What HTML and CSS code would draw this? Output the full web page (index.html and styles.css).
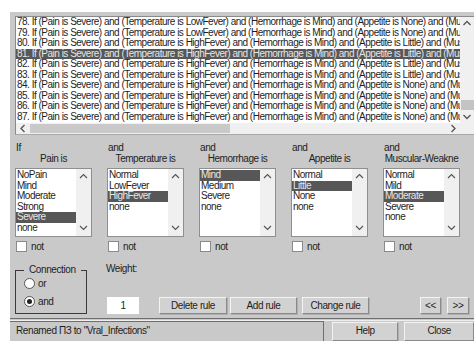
FILE: index.html
```html
<!DOCTYPE html>
<html>
<head>
<meta charset="utf-8">
<link rel="stylesheet" href="styles.css">
</head>
<body>
<div class="win">
  <div class="rules">
    <div class="rules-body">
      <div class="rows">
        <div class="row">78. If (Pain is Severe) and (Temperature is LowFever) and (Hemorrhage is Mind) and (Appetite is None) and (Muscular-Weakness is Normal)</div>
        <div class="row">79. If (Pain is Severe) and (Temperature is LowFever) and (Hemorrhage is Mind) and (Appetite is None) and (Muscular-Weakness is Mild)</div>
        <div class="row">80. If (Pain is Severe) and (Temperature is HighFever) and (Hemorrhage is Mind) and (Appetite is Little) and (Muscular-Weakness is Normal)</div>
        <div class="row sel">81. If (Pain is Severe) and (Temperature is HighFever) and (Hemorrhage is Mind) and (Appetite is Little) and (Muscular-Weakness is Moderate)</div>
        <div class="row">82. If (Pain is Severe) and (Temperature is HighFever) and (Hemorrhage is Mind) and (Appetite is Little) and (Muscular-Weakness is Mild)</div>
        <div class="row">83. If (Pain is Severe) and (Temperature is HighFever) and (Hemorrhage is Mind) and (Appetite is Little) and (Muscular-Weakness is Severe)</div>
        <div class="row">84. If (Pain is Severe) and (Temperature is HighFever) and (Hemorrhage is Mind) and (Appetite is None) and (Muscular-Weakness is Normal)</div>
        <div class="row">85. If (Pain is Severe) and (Temperature is HighFever) and (Hemorrhage is Mind) and (Appetite is None) and (Muscular-Weakness is Mild)</div>
        <div class="row">86. If (Pain is Severe) and (Temperature is HighFever) and (Hemorrhage is Mind) and (Appetite is None) and (Muscular-Weakness is Moderate)</div>
        <div class="row">87. If (Pain is Severe) and (Temperature is HighFever) and (Hemorrhage is Mind) and (Appetite is None) and (Muscular-Weakness is Severe)</div>
      </div>
      <div class="vscroll">
        <svg class="arr" width="14" height="12" viewBox="0 0 14 12"><polyline points="3.5,8 7,4.5 10.5,8" fill="none" stroke="#555" stroke-width="1.3"/></svg>
        <div class="vtrack"><div class="vthumb"></div></div>
        <svg class="arr" width="14" height="12" viewBox="0 0 14 12"><polyline points="3.5,4 7,7.5 10.5,4" fill="none" stroke="#555" stroke-width="1.3"/></svg>
      </div>
    </div>
    <div class="hscroll">
      <svg class="harr" width="14" height="11" viewBox="0 0 14 11"><polyline points="8.5,2 5,5.5 8.5,9" fill="none" stroke="#555" stroke-width="1.3"/></svg>
      <div class="htrack"><div class="hthumb"></div></div>
      <svg class="harr" width="14" height="11" viewBox="0 0 14 11"><polyline points="5.5,2 9,5.5 5.5,9" fill="none" stroke="#555" stroke-width="1.3"/></svg>
      <div class="corner"></div>
    </div>
  </div>

  <div class="filters">
    <div class="col">
      <div class="lbl">If</div>
      <div class="ttl">Pain is</div>
      <div class="lb">
        <div class="items">
          <div class="it">NoPain</div><div class="it">Mind</div><div class="it">Moderate</div><div class="it">Strong</div><div class="it sel">Severe</div><div class="it">none</div>
        </div>
        <div class="sb">
          <svg width="15" height="12" viewBox="0 0 15 12"><polyline points="4,8 7.5,4.5 11,8" fill="none" stroke="#555" stroke-width="1.2"/></svg>
          <svg width="15" height="12" viewBox="0 0 15 12"><polyline points="4,4 7.5,7.5 11,4" fill="none" stroke="#555" stroke-width="1.2"/></svg>
        </div>
      </div>
      <div class="chk"><span class="box"></span><span>not</span></div>
    </div>
    <div class="col">
      <div class="lbl">and</div>
      <div class="ttl">Temperature is</div>
      <div class="lb">
        <div class="items">
          <div class="it">Normal</div><div class="it">LowFever</div><div class="it sel">HighFever</div><div class="it">none</div>
        </div>
        <div class="sb">
          <svg width="15" height="12" viewBox="0 0 15 12"><polyline points="4,8 7.5,4.5 11,8" fill="none" stroke="#555" stroke-width="1.2"/></svg>
          <svg width="15" height="12" viewBox="0 0 15 12"><polyline points="4,4 7.5,7.5 11,4" fill="none" stroke="#555" stroke-width="1.2"/></svg>
        </div>
      </div>
      <div class="chk"><span class="box"></span><span>not</span></div>
    </div>
    <div class="col">
      <div class="lbl">and</div>
      <div class="ttl">Hemorrhage is</div>
      <div class="lb">
        <div class="items">
          <div class="it sel">Mind</div><div class="it">Medium</div><div class="it">Severe</div><div class="it">none</div>
        </div>
        <div class="sb">
          <svg width="15" height="12" viewBox="0 0 15 12"><polyline points="4,8 7.5,4.5 11,8" fill="none" stroke="#555" stroke-width="1.2"/></svg>
          <svg width="15" height="12" viewBox="0 0 15 12"><polyline points="4,4 7.5,7.5 11,4" fill="none" stroke="#555" stroke-width="1.2"/></svg>
        </div>
      </div>
      <div class="chk"><span class="box"></span><span>not</span></div>
    </div>
    <div class="col">
      <div class="lbl">and</div>
      <div class="ttl">Appetite is</div>
      <div class="lb">
        <div class="items">
          <div class="it">Normal</div><div class="it sel">Little</div><div class="it">None</div><div class="it">none</div>
        </div>
        <div class="sb">
          <svg width="15" height="12" viewBox="0 0 15 12"><polyline points="4,8 7.5,4.5 11,8" fill="none" stroke="#555" stroke-width="1.2"/></svg>
          <svg width="15" height="12" viewBox="0 0 15 12"><polyline points="4,4 7.5,7.5 11,4" fill="none" stroke="#555" stroke-width="1.2"/></svg>
        </div>
      </div>
      <div class="chk"><span class="box"></span><span>not</span></div>
    </div>
    <div class="col">
      <div class="lbl">and</div>
      <div class="ttl">Muscular-Weakne</div>
      <div class="lb">
        <div class="items">
          <div class="it">Normal</div><div class="it">Mild</div><div class="it sel">Moderate</div><div class="it">Severe</div><div class="it">none</div>
        </div>
        <div class="sb">
          <svg width="15" height="12" viewBox="0 0 15 12"><polyline points="4,8 7.5,4.5 11,8" fill="none" stroke="#555" stroke-width="1.2"/></svg>
          <svg width="15" height="12" viewBox="0 0 15 12"><polyline points="4,4 7.5,7.5 11,4" fill="none" stroke="#555" stroke-width="1.2"/></svg>
        </div>
      </div>
      <div class="chk"><span class="box"></span><span>not</span></div>
    </div>
  </div>

  <div class="actions">
    <div class="conn">
      <div class="legend">Connection</div>
      <div class="radio"><span class="rb"></span><span>or</span></div>
      <div class="radio"><span class="rb on"></span><span>and</span></div>
    </div>
    <div class="weight">
      <div class="wlbl">Weight:</div>
      <div class="inp">1</div>
    </div>
    <div class="btn b-del">Delete rule</div>
    <div class="btn b-add">Add rule</div>
    <div class="btn b-chg">Change rule</div>
    <div class="btn b-prev">&lt;&lt;</div>
    <div class="btn b-next">&gt;&gt;</div>
  </div>

  <div class="sep"></div>

  <div class="status">
    <div class="panel">Renamed ПЗ to "Vral_Infections"</div>
    <div class="btn b-help">Help</div>
    <div class="btn b-close">Close</div>
  </div>
</div>
</body>
</html>
```

FILE: styles.css
```css
* { box-sizing: border-box; }
html, body { margin: 0; padding: 0; background: #fff; }
body {
  font-family: "Liberation Sans", Arial, sans-serif;
  font-size: 10px;
  letter-spacing: -0.4px;
  color: #1e1e1e;
  width: 474px;
  height: 348px;
  overflow: hidden;
}
.win {
  margin: 12px 0 0 10px;
  width: 464px;
  height: 329px;
  background: #c9c9c9;
  padding: 4px 0 0 5px;
  overflow: hidden;
}

/* main rules list */
.rules {
  width: 459px;
  height: 119px;
  background: #fff;
  border-top: 1px solid #8a8a8a;
  border-left: 1px solid #8a8a8a;
  border-bottom: 1px solid #a8a8a8;
  display: flex;
  flex-direction: column;
}
.rules-body { display: flex; height: 106px; }
.rows { flex: 1; overflow: hidden; }
.row {
  height: 10.5px;
  line-height: 10.5px;
  white-space: nowrap;
  padding-left: 1px;
  letter-spacing: -0.5px;
}
.row.sel { background: #575757; color: #e6e6e6; }
.vscroll {
  width: 14px;
  background: #f0f0f0;
  display: flex;
  flex-direction: column;
}
.arr { display: block; flex: none; }
.vtrack { flex: 1; position: relative; }
.vthumb {
  position: absolute;
  left: 1px; right: 0;
  top: 71px; height: 10px;
  background: #c4c4c4;
}
.hscroll {
  height: 11px;
  background: #f0f0f0;
  display: flex;
  align-items: center;
}
.harr { display: block; flex: none; }
.htrack { flex: 1; height: 11px; position: relative; }
.hthumb {
  position: absolute;
  left: 0; width: 200px;
  top: 1px; bottom: 1px;
  background: #c9c9c9;
}
.corner { width: 14px; height: 11px; background: #f0f0f0; }

/* filter columns */
.filters {
  display: flex;
  gap: 15px;
  margin-top: 7px;
}
.col { width: 77px; flex: none; }
.lbl { height: 11px; line-height: 11px; padding-left: 1px; }
.ttl {
  height: 11px;
  line-height: 11px;
  text-align: center;
  white-space: nowrap;
  overflow: hidden;
  letter-spacing: -0.45px;
}
.lb {
  margin-top: 4px;
  height: 69px;
  background: #fff;
  border: 1px solid #8f8f8f;
  display: flex;
}
.items { flex: 1; padding-top: 1px; overflow: hidden; }
.it {
  height: 10.5px;
  line-height: 10.5px;
  padding-left: 1px;
  white-space: nowrap;
  letter-spacing: -0.5px;
}
.it.sel { background: #575757; color: #e6e6e6; }
.sb {
  width: 15px;
  background: #f0f0f0;
  display: flex;
  flex-direction: column;
  justify-content: space-between;
  padding: 1px 0 2px;
}
.sb svg { display: block; }
.chk {
  margin-top: 4px;
  display: flex;
  align-items: center;
  gap: 4px;
  height: 11px;
  padding-left: 1px;
}
.box {
  width: 11px;
  height: 11px;
  background: #fff;
  border: 1px solid #8a8a8a;
}

/* actions row */
.actions {
  display: flex;
  align-items: flex-end;
  margin-top: 10px;
  height: 53px;
}
.conn {
  width: 72px;
  height: 44px;
  border: 1px solid #3a3a3a;
  position: relative;
  margin-bottom: 1px;
  padding: 6px 0 0 8px;
}
.legend {
  position: absolute;
  top: -7px;
  left: 8px;
  padding: 0 5px;
  background: #c9c9c9;
  line-height: 12px;
}
.radio {
  display: flex;
  align-items: center;
  gap: 3px;
  height: 12px;
  margin-bottom: 6px;
}
.rb {
  width: 11px;
  height: 11px;
  border-radius: 50%;
  background: #fff;
  border: 1px solid #555;
  position: relative;
}
.rb.on::after {
  content: "";
  position: absolute;
  left: 2px; top: 2px;
  width: 5px; height: 5px;
  border-radius: 50%;
  background: #222;
}
.weight {
  margin-left: 19px;
  display: flex;
  flex-direction: column;
  justify-content: space-between;
  height: 52px;
}
.wlbl { line-height: 12px; }
.inp {
  margin-left: 1px;
  width: 32px;
  height: 17px;
  margin-bottom: 1px;
  background: #fff;
  text-align: center;
  line-height: 17px;
}
.btn {
  height: 17px;
  margin-bottom: 1px;
  background: #d2d2d2;
  border: 1px solid #f4f4f4;
  border-right-color: #8a8a8a;
  border-bottom-color: #8a8a8a;
  box-shadow: 1px 1px 0 #b0b0b0;
  text-align: center;
  line-height: 15px;
  white-space: nowrap;
}
.b-del { margin-left: 20px; width: 68px; }
.b-add { margin-left: 3px; width: 67px; }
.b-chg { margin-left: 5px; width: 67px; }
.b-prev { margin-left: 51px; width: 21px; }
.b-next { margin-left: 6px; width: 22px; }

.sep {
  margin: 3px 0 0 -5px;
  height: 3px;
  border-top: 1px solid #6e6e6e;
  border-bottom: 1px solid #efefef;
}

.status {
  display: flex;
  margin-left: -5px;
  height: 21px;
}
.panel {
  width: 316px;
  height: 21px;
  border-top: 1px solid #6e6e6e;
  border-right: 1px solid #6e6e6e;
  padding-left: 6px;
  line-height: 18px;
}
.b-help {
  margin-left: 8px;
  width: 67px;
  height: 19px;
  margin-top: 1px;
  line-height: 16px;
}
.b-close {
  margin-left: 6px;
  width: 70px;
  height: 19px;
  margin-top: 1px;
  line-height: 16px;
}
```
